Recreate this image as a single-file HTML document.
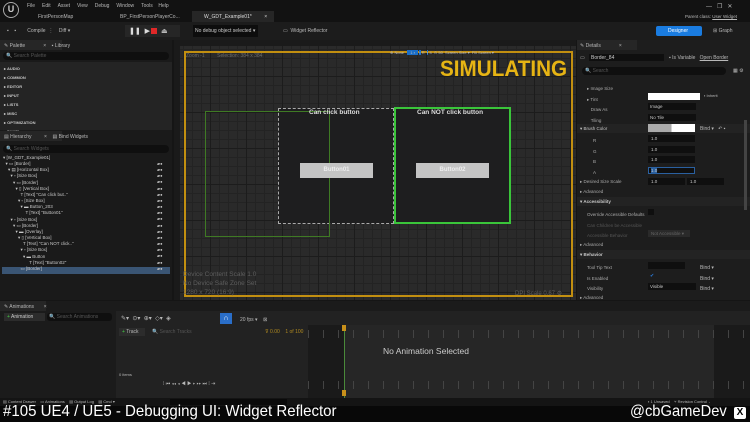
<!DOCTYPE html>
<html><head><meta charset="utf-8"><style>
*{margin:0;padding:0;box-sizing:border-box}
body{width:750px;height:422px;overflow:hidden;background:#151515;font-family:"Liberation Sans",sans-serif;color:#c0c0c0;position:relative}
.a{position:absolute}
.t{position:absolute;font-size:5px;color:#b8b8b8;white-space:nowrap}
.tr{position:absolute;font-size:4.5px;color:#c8c8c8;white-space:nowrap}
.f{position:absolute;background:#0f0f0f;height:7px}
</style></head><body>
<!-- top bar -->
<div class="a" style="left:0;top:0;width:750px;height:22px;background:#121212"></div>
<div class="a" style="left:3px;top:2px;width:16px;height:16px;border-radius:50%;border:1.5px solid #aaa;color:#ccc;font-size:9px;text-align:center;line-height:13px;font-weight:bold">U</div>
<div class="t" style="left:27px;top:3px">File&nbsp;&nbsp;&nbsp;&nbsp;&nbsp;Edit&nbsp;&nbsp;&nbsp;&nbsp;&nbsp;Asset&nbsp;&nbsp;&nbsp;&nbsp;&nbsp;View&nbsp;&nbsp;&nbsp;&nbsp;&nbsp;Debug&nbsp;&nbsp;&nbsp;&nbsp;&nbsp;Window&nbsp;&nbsp;&nbsp;&nbsp;&nbsp;Tools&nbsp;&nbsp;&nbsp;&nbsp;Help</div>
<div class="t" style="left:38px;top:14px">FirstPersonMap</div>
<div class="t" style="left:120px;top:14px">BP_FirstPersonPlayerCo...</div>
<div class="a" style="left:192px;top:11px;width:82px;height:11px;background:#262626"></div>
<div class="t" style="left:204px;top:14px;color:#ddd">W_GDT_Example01*&nbsp;&nbsp;&nbsp;&nbsp;&nbsp;&nbsp;&nbsp;&nbsp;&nbsp;×</div>
<div class="t" style="left:706px;top:3px;font-size:6px">—&nbsp;&nbsp;&nbsp;❐&nbsp;&nbsp;&nbsp;✕</div>
<div class="t" style="left:685px;top:14px;font-size:4.5px">Parent class: <u>User Widget</u></div>
<!-- toolbar -->
<div class="a" style="left:0;top:22px;width:750px;height:18px;background:#1c1c1c"></div>
<div class="t" style="left:7px;top:28px">▪&nbsp;&nbsp;&nbsp;&nbsp;▪&nbsp;&nbsp;&nbsp;&nbsp;&nbsp;&nbsp;&nbsp;&nbsp;Compile&nbsp;&nbsp;⋮&nbsp;&nbsp;&nbsp;&nbsp;Diff ▾</div>
<div class="a" style="left:125px;top:25px;width:55px;height:12px;background:#262626"></div>
<div class="t" style="left:129px;top:27px;font-size:7px;color:#ddd">❚❚&nbsp;&nbsp;▶</div>
<div class="a" style="left:151px;top:28px;width:6px;height:6px;background:#e02828"></div>
<div class="t" style="left:161px;top:27px;font-size:7px">⏏</div>
<div class="a" style="left:193px;top:25px;width:65px;height:12px;background:#0d0d0d"></div>
<div class="t" style="left:195px;top:28px;color:#ccc">No debug object selected ▾</div>
<div class="t" style="left:283px;top:28px">▭&nbsp;&nbsp;Widget Reflector</div>
<div class="a" style="left:656px;top:26px;width:46px;height:10px;background:#1a7ce0;border-radius:2px"></div>
<div class="t" style="left:668px;top:28px;color:#fff">Designer</div>
<div class="t" style="left:713px;top:28px">⊞ Graph</div>
<!-- left panel -->
<div class="a" style="left:0;top:40px;width:172px;height:260px;background:#1a1a1a"></div>
<div class="a" style="left:0;top:40px;width:62px;height:10px;background:#262626"></div>
<div class="t" style="left:4px;top:43px">✎ Palette&nbsp;&nbsp;&nbsp;&nbsp;&nbsp;&nbsp;&nbsp;&nbsp;&nbsp;&nbsp;&nbsp;&nbsp;&nbsp;×&nbsp;&nbsp;&nbsp;&nbsp;▪ Library</div>
<div class="a" style="left:3px;top:52px;width:166px;height:8px;background:#0f0f0f;border-radius:4px"></div>
<div class="t" style="left:6px;top:53px;color:#555">🔍 Search Palette</div>
<div class="a" style="left:0;top:62px;width:172px;height:68px;background:#242424"></div>
<div class="tr" style="left:4px;top:64px;line-height:9px;font-weight:bold;font-size:4px">▸ AUDIO<br>▸ COMMON<br>▸ EDITOR<br>▸ INPUT<br>▸ LISTS<br>▸ MISC<br>▸ OPTIMIZATION<br>▸ PANEL</div>
<div class="a" style="left:0;top:131px;width:62px;height:10px;background:#262626"></div>
<div class="t" style="left:4px;top:134px">▤ Hierarchy&nbsp;&nbsp;&nbsp;&nbsp;&nbsp;&nbsp;&nbsp;&nbsp;&nbsp;×&nbsp;&nbsp;&nbsp;&nbsp;▤ Bind Widgets</div>
<div class="a" style="left:3px;top:145px;width:166px;height:8px;background:#0f0f0f;border-radius:4px"></div>
<div class="t" style="left:6px;top:146px;color:#555">🔍 Search Widgets</div>
<div class="a" style="left:2px;top:267px;width:168px;height:7px;background:#3a5574"></div>
<div class="tr" style="left:3px;top:155px;line-height:6.15px">
▾ [W_GDT_Example01]<br>
&nbsp;&nbsp;▾ ▭ [Border]<br>
&nbsp;&nbsp;&nbsp;&nbsp;▾ ▤ [Horizontal Box]<br>
&nbsp;&nbsp;&nbsp;&nbsp;&nbsp;&nbsp;▾ ▫ [Size Box]<br>
&nbsp;&nbsp;&nbsp;&nbsp;&nbsp;&nbsp;&nbsp;&nbsp;▾ ▭ [Border]<br>
&nbsp;&nbsp;&nbsp;&nbsp;&nbsp;&nbsp;&nbsp;&nbsp;&nbsp;&nbsp;▾ ▯ [Vertical Box]<br>
&nbsp;&nbsp;&nbsp;&nbsp;&nbsp;&nbsp;&nbsp;&nbsp;&nbsp;&nbsp;&nbsp;&nbsp;&nbsp;&nbsp;T [Text] "Can click but.."<br>
&nbsp;&nbsp;&nbsp;&nbsp;&nbsp;&nbsp;&nbsp;&nbsp;&nbsp;&nbsp;&nbsp;&nbsp;▾ ▫ [Size Box]<br>
&nbsp;&nbsp;&nbsp;&nbsp;&nbsp;&nbsp;&nbsp;&nbsp;&nbsp;&nbsp;&nbsp;&nbsp;&nbsp;&nbsp;▾ ▬ Button_203<br>
&nbsp;&nbsp;&nbsp;&nbsp;&nbsp;&nbsp;&nbsp;&nbsp;&nbsp;&nbsp;&nbsp;&nbsp;&nbsp;&nbsp;&nbsp;&nbsp;&nbsp;&nbsp;T [Text] "Button01"<br>
&nbsp;&nbsp;&nbsp;&nbsp;&nbsp;&nbsp;▾ ▫ [Size Box]<br>
&nbsp;&nbsp;&nbsp;&nbsp;&nbsp;&nbsp;&nbsp;&nbsp;▾ ▭ [Border]<br>
&nbsp;&nbsp;&nbsp;&nbsp;&nbsp;&nbsp;&nbsp;&nbsp;&nbsp;&nbsp;▾ ▬ [Overlay]<br>
&nbsp;&nbsp;&nbsp;&nbsp;&nbsp;&nbsp;&nbsp;&nbsp;&nbsp;&nbsp;&nbsp;&nbsp;▾ ▯ [Vertical Box]<br>
&nbsp;&nbsp;&nbsp;&nbsp;&nbsp;&nbsp;&nbsp;&nbsp;&nbsp;&nbsp;&nbsp;&nbsp;&nbsp;&nbsp;&nbsp;&nbsp;T [Text] "Can NOT click.."<br>
&nbsp;&nbsp;&nbsp;&nbsp;&nbsp;&nbsp;&nbsp;&nbsp;&nbsp;&nbsp;&nbsp;&nbsp;&nbsp;&nbsp;▾ ▫ [Size Box]<br>
&nbsp;&nbsp;&nbsp;&nbsp;&nbsp;&nbsp;&nbsp;&nbsp;&nbsp;&nbsp;&nbsp;&nbsp;&nbsp;&nbsp;&nbsp;&nbsp;▾ ▬ Button<br>
&nbsp;&nbsp;&nbsp;&nbsp;&nbsp;&nbsp;&nbsp;&nbsp;&nbsp;&nbsp;&nbsp;&nbsp;&nbsp;&nbsp;&nbsp;&nbsp;&nbsp;&nbsp;&nbsp;&nbsp;&nbsp;T [Text] "Button02"<br>
&nbsp;&nbsp;&nbsp;&nbsp;&nbsp;&nbsp;&nbsp;&nbsp;&nbsp;&nbsp;&nbsp;&nbsp;&nbsp;&nbsp;▭ [Border]</div>
<div class="tr" style="left:157px;top:161px;line-height:6.15px;font-size:4px">▰●<br>▰●<br>▰●<br>▰●<br>▰●<br>▰●<br>▰●<br>▰●<br>▰●<br>▰●<br>▰●<br>▰●<br>▰●<br>▰●<br>▰●<br>▰●<br>▰●<br>▰●</div>
<!-- viewport -->
<div class="a" style="left:174px;top:40px;width:402px;height:260px;background-color:#2a2a2a;background-image:linear-gradient(#1c1c1c 1px,transparent 1px),linear-gradient(90deg,#1c1c1c 1px,transparent 1px),linear-gradient(#232323 1px,transparent 1px),linear-gradient(90deg,#232323 1px,transparent 1px);background-size:36px 36px,36px 36px,9px 9px,9px 9px"></div>
<div class="a" style="left:174px;top:40px;width:402px;height:6px;background:#1a1a1a"></div>
<div class="a" style="left:174px;top:40px;width:6px;height:260px;background:#1a1a1a"></div>
<div class="a" style="left:184px;top:51px;width:389px;height:246px;border:2px solid #c28f10"></div>
<div class="t" style="left:186px;top:53px;color:#6a6a6a">Zoom -1&nbsp;&nbsp;&nbsp;&nbsp;&nbsp;&nbsp;&nbsp;&nbsp;&nbsp;Selection: 384 x 384</div>
<div class="t" style="left:390px;top:50px;font-size:4px;color:#bbb">⊕ None&nbsp;&nbsp;&nbsp;<span style="background:#1a6ec8;padding:0 3px">1 ▪</span>&nbsp;<span style="background:#1a6ec8">▪</span>&nbsp;R&nbsp;&nbsp;<span style="background:#1a6ec8">▪</span> 4&nbsp;&nbsp;⊙ 50&nbsp;&nbsp;Screen Size ▾&nbsp;&nbsp;Fill Screen ▾</div>
<div class="a" style="left:440px;top:56px;font-size:22px;font-weight:bold;color:#e6b414;white-space:nowrap;transform:scaleX(.94);transform-origin:left">SIMULATING</div>
<div class="a" style="left:278px;top:108px;width:116px;height:116px;background:#1e1e1f;border:1px dashed #aaa"></div>
<div class="a" style="left:394px;top:107px;width:117px;height:117px;background:#1e1e1f;border:2px solid #3ac53a"></div>
<div class="a" style="left:205px;top:111px;width:125px;height:126px;border:1px solid #3f7a24"></div>
<div class="t" style="left:309px;top:109px;font-size:6.5px;font-weight:bold;color:#ddd">Can click button</div>
<div class="t" style="left:417px;top:109px;font-size:6.5px;font-weight:bold;color:#ddd">Can NOT click button</div>
<div class="a" style="left:300px;top:163px;width:73px;height:15px;background:#c4c4c4;color:#eee;font-size:6px;font-weight:bold;text-align:center;line-height:15px">Button01</div>
<div class="a" style="left:416px;top:163px;width:73px;height:15px;background:#c4c4c4;color:#eee;font-size:6px;font-weight:bold;text-align:center;line-height:15px">Button02</div>
<div class="t" style="left:183px;top:270px;font-size:6.5px;color:#5e5e5e;line-height:9px">Device Content Scale 1.0<br>No Device Safe Zone Set<br>1280 x 720 (16:9)</div>
<div class="t" style="left:515px;top:290px;font-size:6px;color:#5e5e5e">DPI Scale 0.67 ⚙</div>
<!-- details -->
<div class="a" style="left:577px;top:40px;width:173px;height:260px;background:#1d1d1d"></div>
<div class="a" style="left:577px;top:40px;width:60px;height:10px;background:#262626"></div>
<div class="t" style="left:580px;top:43px">✎ Details&nbsp;&nbsp;&nbsp;&nbsp;&nbsp;&nbsp;&nbsp;&nbsp;&nbsp;&nbsp;&nbsp;&nbsp;&nbsp;×</div>
<div class="t" style="left:580px;top:55px">▭</div>
<div class="f" style="left:589px;top:54px;width:75px"></div>
<div class="t" style="left:591px;top:55px;color:#ccc">Border_84</div>
<div class="t" style="left:669px;top:55px">▪ Is Variable&nbsp;&nbsp;&nbsp;<u>Open Border</u></div>
<div class="a" style="left:582px;top:67px;width:144px;height:8px;background:#0f0f0f;border-radius:4px"></div>
<div class="t" style="left:585px;top:68px;color:#555">🔍 Search</div>
<div class="t" style="left:733px;top:68px">▦ ⚙</div>
<div class="tr" style="left:587px;top:84px;line-height:10.5px;color:#aaa">▸ Image Size<br>▸ Tint<br>&nbsp;&nbsp;&nbsp;Draw As<br>&nbsp;&nbsp;&nbsp;Tiling</div>
<div class="a" style="left:648px;top:93px;width:52px;height:7px;background:#fff"></div>
<div class="t" style="left:704px;top:93px;font-size:4px">▪ Inherit</div>
<div class="f" style="left:648px;top:103px;width:48px"></div><div class="tr" style="left:650px;top:104px">Image</div>
<div class="f" style="left:648px;top:114px;width:48px"></div><div class="tr" style="left:650px;top:115px">No Tile</div>
<div class="a" style="left:577px;top:124px;width:173px;height:9px;background:#232323"></div>
<div class="tr" style="left:580px;top:126px">▾ Brush Color</div>
<div class="a" style="left:648px;top:124px;width:47px;height:8px;background:linear-gradient(90deg,#aaa 50%,#fff 50%)"></div>
<div class="t" style="left:700px;top:126px">Bind ▾&nbsp;&nbsp;&nbsp;↶ ▪</div>
<div class="tr" style="left:593px;top:136px;line-height:10.5px;color:#aaa">R<br>G<br>B<br>A</div>
<div class="f" style="left:648px;top:135px;width:47px"></div><div class="tr" style="left:651px;top:136px">1.0</div>
<div class="f" style="left:648px;top:146px;width:47px"></div><div class="tr" style="left:651px;top:147px">1.0</div>
<div class="f" style="left:648px;top:156px;width:47px"></div><div class="tr" style="left:651px;top:157px">1.0</div>
<div class="f" style="left:648px;top:167px;width:47px;border:1px solid #2a60a0"></div><div class="tr" style="left:651px;top:168px;background:#2a60a0">1.0</div>
<div class="tr" style="left:580px;top:179px;color:#aaa">▸ Desired Size Scale</div>
<div class="f" style="left:648px;top:178px;width:37px"></div><div class="tr" style="left:651px;top:179px">1.0</div>
<div class="f" style="left:687px;top:178px;width:37px"></div><div class="tr" style="left:690px;top:179px">1.0</div>
<div class="tr" style="left:580px;top:189px;color:#aaa">▸ Advanced</div>
<div class="a" style="left:577px;top:197px;width:173px;height:9px;background:#232323"></div>
<div class="tr" style="left:580px;top:199px;font-weight:bold">▾ Accessibility</div>
<div class="tr" style="left:587px;top:210px;line-height:10.5px;color:#aaa">Override Accessible Defaults<br><span style="color:#555">Can Children be Accessible<br>Accessible Behavior</span></div>
<div class="a" style="left:648px;top:209px;width:6px;height:6px;background:#0f0f0f"></div>
<div class="f" style="left:648px;top:230px;width:42px;background:#2a2a2a"></div><div class="tr" style="left:651px;top:231px;color:#666">Not Accessible ▾</div>
<div class="tr" style="left:580px;top:242px;color:#aaa">▸ Advanced</div>
<div class="a" style="left:577px;top:250px;width:173px;height:9px;background:#232323"></div>
<div class="tr" style="left:580px;top:252px;font-weight:bold">▾ Behavior</div>
<div class="tr" style="left:587px;top:263px;line-height:10.5px;color:#aaa">Tool Tip Text<br>Is Enabled<br>Visibility</div>
<div class="f" style="left:648px;top:262px;width:37px"></div>
<div class="t" style="left:650px;top:273px;color:#2a7ee0">✔</div>
<div class="f" style="left:648px;top:283px;width:48px"></div><div class="tr" style="left:650px;top:284px">Visible</div>
<div class="t" style="left:700px;top:263px;line-height:10.5px">Bind ▾<br>Bind ▾<br>Bind ▾</div>
<div class="tr" style="left:580px;top:295px;color:#aaa">▸ Advanced</div>
<div class="a" style="left:744px;top:120px;width:3px;height:90px;background:#444"></div>
<!-- animations -->
<div class="a" style="left:0;top:301px;width:750px;height:97px;background:#1b1b1b"></div>
<div class="a" style="left:0;top:301px;width:46px;height:10px;background:#262626"></div>
<div class="t" style="left:4px;top:304px">✎ Animations&nbsp;&nbsp;&nbsp;&nbsp;&nbsp;&nbsp;&nbsp;×</div>
<div class="a" style="left:4px;top:313px;width:41px;height:8px;background:#2c2c2c"></div>
<div class="t" style="left:7px;top:314px;color:#ccc"><span style="color:#4c4">+</span> Animation</div>
<div class="a" style="left:47px;top:313px;width:65px;height:8px;background:#0f0f0f;border-radius:3px"></div>
<div class="t" style="left:49px;top:314px;color:#555">🔍 Search Animations</div>
<div class="a" style="left:116px;top:311px;width:634px;height:87px;background:#222"></div>
<div class="t" style="left:121px;top:315px;font-size:6px">✎▾&nbsp;&nbsp;⊙▾&nbsp;&nbsp;⊕▾&nbsp;&nbsp;◇▾&nbsp;&nbsp;◈</div>
<div class="a" style="left:220px;top:313px;width:12px;height:11px;background:#2a6ec8;color:#fff;font-size:7px;text-align:center;line-height:11px">∩</div>
<div class="t" style="left:240px;top:317px">20 fps ▾&nbsp;&nbsp;&nbsp;&nbsp;⊠</div>
<div class="a" style="left:119px;top:328px;width:26px;height:8px;background:#2c2c2c"></div>
<div class="t" style="left:122px;top:329px"><span style="color:#4c4">+</span> Track</div>
<div class="t" style="left:152px;top:329px;color:#555">🔍 Search Tracks</div>
<div class="t" style="left:265px;top:329px;color:#b08a20">⊽ 0.00&nbsp;&nbsp;&nbsp;&nbsp;1 of 100</div>
<div class="a" style="left:308px;top:325px;width:442px;height:73px;background:#1a1a1a"></div>
<div class="a" style="left:344px;top:325px;width:370px;height:73px;background:#262626"></div>
<div class="a" style="left:308px;top:330px;width:442px;height:8px;background:repeating-linear-gradient(90deg,#444 0 1px,transparent 1px 15px)"></div>
<div class="a" style="left:308px;top:381px;width:442px;height:8px;background:repeating-linear-gradient(90deg,#444 0 1px,transparent 1px 15px)"></div>
<div class="a" style="left:344px;top:325px;width:1px;height:73px;background:#4a8a3a"></div>
<div class="a" style="left:342px;top:325px;width:4px;height:6px;background:#c8901a"></div>
<div class="a" style="left:342px;top:390px;width:4px;height:6px;background:#c8901a"></div>
<div class="t" style="left:383px;top:346px;font-size:8.5px;color:#ccc">No Animation Selected</div>
<div class="t" style="left:119px;top:372px;font-size:4px">0 items</div>
<div class="t" style="left:163px;top:381px;font-size:5px">⁞ ⏮ ◂◂ ◂ ◀ ▶ ▸ ▸▸ ⏭ ⁞ ⇥</div>
<!-- status -->
<div class="a" style="left:0;top:398px;width:750px;height:8px;background:#141414"></div>
<div class="t" style="left:3px;top:399px;font-size:4px">▤ Content Drawer&nbsp;&nbsp;&nbsp;&nbsp;▭ Animations&nbsp;&nbsp;&nbsp;&nbsp;▤ Output Log&nbsp;&nbsp;&nbsp;&nbsp;▤ Cmd ▾</div>
<div class="a" style="left:170px;top:399px;width:117px;height:6px;background:#0a0a0a"></div>
<div class="t" style="left:648px;top:399px;font-size:4px">▪ 1 Unsaved&nbsp;&nbsp;&nbsp;&nbsp;⑂ Revision Control ▾</div>
<!-- caption -->
<div class="a" style="left:0;top:406px;width:750px;height:16px;background:#080808"></div>
<div class="a" style="left:3px;top:403px;font-size:16px;color:#fff;white-space:nowrap;transform:scaleX(.94);transform-origin:left">#105 UE4 / UE5 - Debugging UI: Widget Reflector</div>
<div class="a" style="left:630px;top:403px;font-size:16px;color:#fff;white-space:nowrap;transform:scaleX(.92);transform-origin:left">@cbGameDev</div>
<div class="a" style="left:734px;top:407px;width:12px;height:12px;background:#fff;border-radius:2px;color:#000;font-size:10px;font-weight:bold;text-align:center;line-height:12px">X</div>
</body></html>
